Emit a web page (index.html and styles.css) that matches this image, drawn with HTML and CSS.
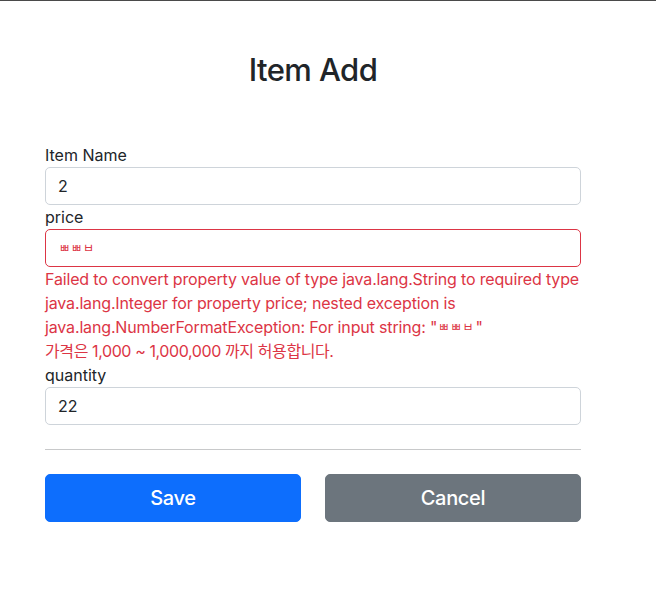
FILE: index.html
```html
<!DOCTYPE html>
<html lang="ko">
<head>
<meta charset="utf-8">
<title>Item Add</title>
<link rel="stylesheet" href="styles.css">
</head>
<body>
<div class="topline"></div>
<div class="container">
  <div class="header">
    <h2>Item Add</h2>
  </div>
  <form class="form">
    <div class="field">
      <label for="itemName">Item Name</label>
      <div class="form-control" id="itemName">2</div>
    </div>
    <div class="field">
      <label for="price">price</label>
      <div class="form-control is-error" id="price"><span class="jamo">ㅃㅃㅂ</span></div>
      <div class="field-error">
        <div>Failed to convert property value of type java.lang.String to required type java.lang.Integer for property price; nested exception is java.lang.NumberFormatException: For input string: "<span class="jamo">ㅃㅃㅂ</span>"</div>
        <div class="ko">가격은 1,000 ~ 1,000,000 까지 허용합니다.</div>
      </div>
    </div>
    <div class="field">
      <label for="quantity">quantity</label>
      <div class="form-control" id="quantity">22</div>
    </div>
    <hr class="divider">
    <div class="buttons">
      <button type="button" class="btn btn-primary">Save</button>
      <button type="button" class="btn btn-secondary">Cancel</button>
    </div>
  </form>
</div>
</body>
</html>
```
FILE: styles.css
```css
html, body {
  margin: 0;
  padding: 0;
  background: #fff;
}
body {
  font-family: "Inter", "Noto Sans CJK KR", sans-serif;
  font-size: 16px;
  line-height: 24px;
  color: #212529;
}
.topline {
  height: 1px;
  background: #4a4a4a;
}
.container {
  width: 536px;
  margin-left: 45px;
}
.header {
  padding: 50px 0 48px;
  text-align: center;
}
.header h2 {
  margin: 0 0 6px;
  font-size: 31px;
  line-height: 38px;
  font-weight: 500;
  letter-spacing: -0.6px;
}
.form {
  margin: 0;
}
label {
  display: block;
}
.form-control {
  box-sizing: border-box;
  height: 38px;
  padding: 6px 12px;
  border: 1px solid #ced4da;
  border-radius: 5px;
  font-size: 16px;
  line-height: 24px;
  color: #212529;
  background: #fff;
}
.form-control.is-error {
  border-color: #dc3545;
  color: #dc3545;
}
.jamo {
  font-family: "Noto Sans CJK KR", sans-serif;
  font-size: 12px;
  line-height: 12px;
  margin: 0 1px;
  letter-spacing: 1px;
  vertical-align: 1px;
}
.field-error {
  color: #dc3545;
  letter-spacing: -0.15px;
}
.ko {
  font-family: "Inter", "Noto Sans CJK KR", sans-serif;
  letter-spacing: -0.4px;
}
.divider {
  margin: 24px 0;
  border: 0;
  border-top: 1px solid #c8c9ca;
  height: 0;
}
.buttons {
  display: grid;
  grid-template-columns: 1fr 1fr;
  gap: 24px;
}
.btn {
  height: 48px;
  border: 1px solid transparent;
  border-radius: 5px;
  font-family: "Inter", sans-serif;
  font-size: 20px;
  line-height: 30px;
  font-weight: 500;
  letter-spacing: -0.3px;
  color: #fff;
  padding: 8px 16px;
}
.btn-primary {
  background: #0d6efd;
  border-color: #0d6efd;
}
.btn-secondary {
  background: #6c757d;
  border-color: #6c757d;
}
```
